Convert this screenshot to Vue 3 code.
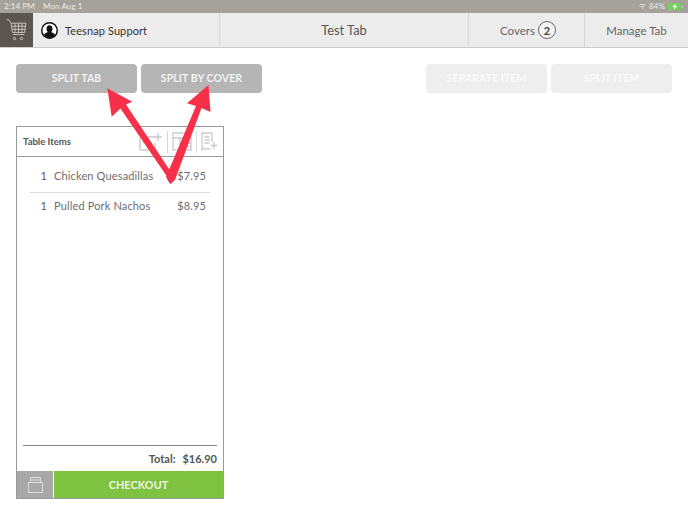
<script setup>
const items = [
  { qty: 1, name: 'Chicken Quesadillas', price: '$7.95' },
  { qty: 1, name: 'Pulled Pork Nachos', price: '$8.95' }
]
</script>

<template>
  <div class="page">
    <div class="status">
      <span class="time">2:14 PM</span><span class="date">Mon Aug 1</span>
      <span class="right">
        <svg width="7" height="5" viewBox="0 0 7 5"><path d="M0.4 1.6a4.400 4.400 0 0 1 6.200 0M1.600 2.900a2.700 2.700 0 0 1 3.800 0" fill="none" stroke="#e8e8e4" stroke-width="0.8"/><path d="M2.600 3.800a1.300 1.300 0 0 1 1.800 0L3.500 5z" fill="#e8e8e4"/></svg>
        <span class="pct">84%</span>
        <svg width="15" height="7" viewBox="0 0 15 7"><rect x="0" y="0" width="13.500" height="7" rx="1.300" fill="#76cf5c"/><rect x="13.800" y="2.300" width="1.100" height="2.400" fill="#c9c9c4"/><path d="M7.800 0.300L4.300 4h2.300L5.800 6.800L9.300 3H7z" fill="#fff"/></svg>
      </span>
    </div>

    <header class="bar">
      <div class="cart">
        <svg width="21" height="23" viewBox="0 0 21 23" fill="none" stroke="#d9d6d2" stroke-width="0.8">
          <path d="M0.500 0.800h2.500l2 3.400h15l-1.500 9.300H6.500L5 4.200"/>
          <path d="M5.800 7.200h14M6.200 10.300h13M9 4.200v9.300M12.500 4.200v9.300M16 4.200v9.300M6.800 15.500h11.500"/>
          <circle cx="8.500" cy="19.500" r="1.200"/><circle cx="15.500" cy="19.500" r="1.200"/>
        </svg>
      </div>
      <div class="user">
        <svg class="avatar" width="17" height="17" viewBox="0 0 17 17">
          <circle cx="8.500" cy="8.500" r="8.500" fill="#111"/>
          <circle cx="8.500" cy="8.500" r="7" fill="#fff"/>
          <ellipse cx="8.500" cy="6.800" rx="3" ry="3.600" fill="#111"/>
          <path d="M2.800 13.200c1-2.400 3-2.600 4-3.200h3.400c1 .6 3 .8 4 3.200a7 7 0 0 1-11.400 0z" fill="#111"/>
        </svg>
        <span>Teesnap Support</span>
      </div>
      <div class="title">Test Tab</div>
      <div class="covers">
        <span>Covers</span><span class="badge">2</span>
      </div>
      <div class="manage">Manage Tab</div>
    </header>

    <div class="actions">
      <div class="group">
        <button class="btn">SPLIT TAB</button>
        <button class="btn">SPLIT BY COVER</button>
      </div>
      <div class="group">
        <button class="btn off">SEPARATE ITEM</button>
        <button class="btn off">SPLIT ITEM</button>
      </div>
    </div>

    <section class="card">
      <div class="card-head">
        <span class="card-title">Table Items</span>
        <div class="tools">
          <svg class="tool" width="26" height="19" viewBox="0 0 26 19" fill="none" stroke="#cbcbcb" stroke-width="1.500">
            <path d="M18 5H4.500a1.500 1.500 0 0 0-1.500 1.500v10A1.500 1.500 0 0 0 4.500 18h12a1.500 1.500 0 0 0 1.500-1.500V11M6 10.500h9"/><path d="M21 1v8M17 5h8"/>
          </svg>
          <i class="sep"></i>
          <svg class="tool" width="20" height="19" viewBox="0 0 20 19" fill="none" stroke="#cbcbcb" stroke-width="1.300">
            <path d="M1 1h13l5 4v13H1zM1 6h18M8 6v12M11 11h8M11 14.500h8"/>
          </svg>
          <i class="sep"></i>
          <svg class="tool" width="17" height="19" viewBox="0 0 17 19" fill="none" stroke="#cbcbcb" stroke-width="1.300">
            <path d="M1 1h10v9M1 1v16.500l2-1.300 2 1.300 2-1.300 2 1.300M3.500 5h5M3.500 8h5M3.500 11h5"/><path d="M13 10v7M9.500 13.500h7"/>
          </svg>
        </div>
      </div>
      <ul class="rows">
        <li v-for="item in items" :key="item.name" class="row">
          <span class="qty">{{ item.qty }}</span>
          <span class="name">{{ item.name }}</span>
          <span class="price">{{ item.price }}</span>
        </li>
      </ul>
      <div class="total"><span>Total:</span><span>$16.90</span></div>
      <div class="foot">
        <div class="print">
          <svg width="15" height="16" viewBox="0 0 15 16" fill="none" stroke="#dcdcdc" stroke-width="1">
            <path d="M2.500 5.500V.5h10v5M2.500 3h10M.5 5.500h14v10H.5z"/>
          </svg>
        </div>
        <div class="checkout">CHECKOUT</div>
      </div>
    </section>

    <svg class="arrows" width="688" height="516" viewBox="0 0 688 516">
      <g fill="#f7304a">
        <path d="M107.300 88.300L132.300 101.700L126 104.500L175 178L171 184L168 178L120.500 108.500L111.700 116.700z"/>
        <path d="M208.500 85L210.500 112L201.500 108L175 180L170 184L166 177L196 106L187 103.300z"/>
      </g>
    </svg>
  </div>
</template>

<style>
html, body { margin: 0; background: #fff; }
</style>

<style scoped>
.page {
  position: relative;
  width: 688px;
  height: 516px;
  overflow: hidden;
  background: #fff;
  font-family: Lato, "Open Sans", sans-serif;
  color: #555;
}
.status {
  height: 13px;
  background: #a5a29c;
  color: #e8e8e4;
  font-size: 8.200px;
  line-height: 13px;
  display: flex;
  align-items: center;
  padding: 0 5px 0 4px;
  box-sizing: border-box;
}
.date { margin-left: 8px; }
.right { margin-left: auto; display: flex; align-items: center; gap: 3px; }
.bar {
  height: 35px;
  box-sizing: border-box;
  background: #ececec;
  border-bottom: 1px solid #cdcdcd;
  display: grid;
  grid-template-columns: 33px 186px 249px 116px 1fr;
  align-items: stretch;
}
.bar > div { display: flex; align-items: center; justify-content: center; }
.cart { background: #5a5550; }
.user { justify-content: flex-start !important; padding-left: 8px; gap: 7px; color: #333; }
.user span { font-size: 11px; letter-spacing: 0.1px; }
.title { border-left: 1px solid #d4d4d4; font-size: 12.800px; color: #555; }
.covers { border-left: 1px solid #d4d4d4; padding-left: 3px; gap: 3px; color: #666; font-size: 11.500px; }
.badge {
  box-sizing: border-box;
  width: 18px;
  height: 18px;
  border: 1px solid #666;
  border-radius: 50%;
  background: #f4f4f4;
  color: #444;
  font-weight: 700;
  font-size: 11px;
  display: flex;
  align-items: center;
  justify-content: center;
}
.manage { border-left: 1px solid #d4d4d4; color: #666; font-size: 11.500px; }
.actions {
  display: flex;
  justify-content: space-between;
  padding: 16px 16px 0;
}
.group { display: flex; gap: 4px; }
.btn {
  width: 121px;
  height: 29px;
  padding: 0 0 2px;
  border: 0;
  border-radius: 4px;
  background: #b5b5b5;
  color: #f2f2f2;
  font-family: inherit;
  font-size: 10.500px;
  font-weight: 700;
  letter-spacing: 0.1px;
}
.btn.off { background: #eeeeee; color: #fafafa; }
.card {
  box-sizing: border-box;
  width: 208px;
  height: 373px;
  margin: 33px 0 0 16px;
  border: 1px solid #9a9a9a;
  display: flex;
  flex-direction: column;
}
.card-head {
  height: 30px;
  flex: none;
  box-sizing: border-box;
  border-bottom: 1px solid #9a9a9a;
  display: flex;
  align-items: center;
  justify-content: space-between;
  padding: 0 5px 0 6px;
}
.card-title { font-size: 9.500px; font-weight: 700; color: #555; }
.tools { display: flex; align-items: center; gap: 2px; }
.tool { display: block; }
.sep { width: 1px; height: 22px; background: #d8d8d8; margin: 0 2px; }
.rows {
  list-style: none;
  margin: 0 13px 0 12px;
  padding: 5px 0 0;
  flex: 1;
}
.row {
  height: 30px;
  box-sizing: border-box;
  padding-bottom: 4px;
  display: flex;
  align-items: center;
  font-size: 11px;
  color: #6e6e6e;
  letter-spacing: 0.15px;
}
.row + .row { border-top: 1px solid #ddd; }
.qty { width: 18px; text-align: right; color: #5c5c5c; }
.name { margin-left: 7px; }
.price { margin-left: auto; padding-right: 4px; }
.total {
  margin: 0 6px;
  height: 26px;
  padding-bottom: 1px;
  box-sizing: border-box;
  border-top: 1px solid #888;
  display: flex;
  justify-content: flex-end;
  align-items: center;
  gap: 7px;
  font-size: 11px;
  font-weight: 700;
  color: #555;
}
.foot { height: 27px; display: flex; flex: none; gap: 1px; }
.print {
  width: 36px;
  background: #a8a8a8;
  display: flex;
  align-items: center;
  justify-content: center;
}
.checkout {
  flex: 1;
  background: #7fc241;
  color: #eef6e0;
  font-size: 10.800px;
  font-weight: 700;
  padding-bottom: 1px;
  display: flex;
  align-items: center;
  justify-content: center;
  letter-spacing: 0.1px;
}
.arrows { position: absolute; left: 0; top: 0; pointer-events: none; }
</style>
